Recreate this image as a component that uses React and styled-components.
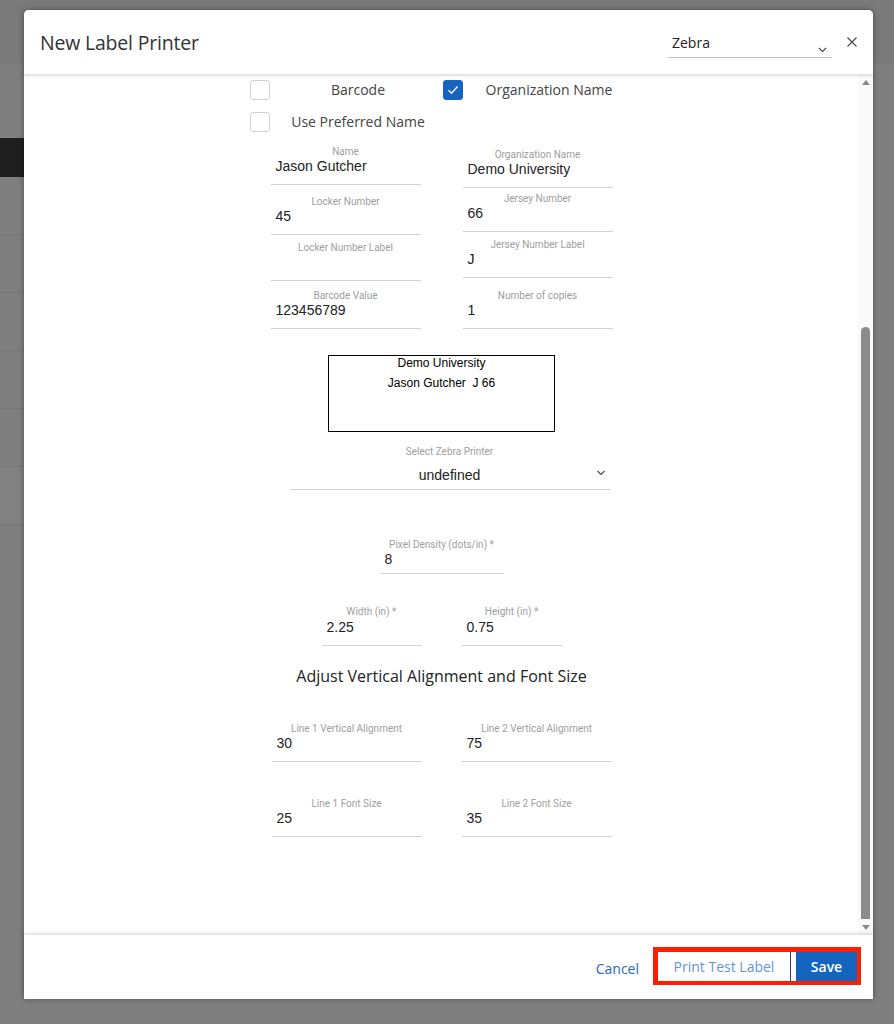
import React from "react";
import styled, { createGlobalStyle } from "styled-components";

const Global = createGlobalStyle`
  html, body { margin: 0; padding: 0; }
  body { background: #7f7f7f; font-family: "Open Sans", "Liberation Sans", sans-serif; overflow: hidden; }
  * { box-sizing: border-box; }
`;

const Page = styled.div`
  position: relative;
  width: 894px;
  height: 1024px;
  background: #7f7f7f;
  overflow: hidden;
`;

const Behind = styled.div`
  display: flex;
  flex-direction: column;
`;

const TopBand = styled.div`
  height: 63px;
  background: #7a7a7a;
`;

const Gap = styled.div`
  height: ${(p) => p.$h}px;
`;

const ActiveRow = styled.div`
  height: 39px;
  width: 24px;
  background: #1e1e1e;
`;

const BgRow = styled.div`
  height: 58px;
  width: 24px;
  border-bottom: 1px solid #777;
  background: ${(p) => (p.$light ? "#828282" : "#7f7f7f")};
`;

const Modal = styled.div`
  position: absolute;
  top: 10px;
  left: 24px;
  width: 849px;
  height: 989px;
  background: #fff;
  border-radius: 5px 5px 0 0;
  box-shadow: 0 0 6px rgba(0, 0, 0, 0.35);
  display: flex;
  flex-direction: column;
`;

const Header = styled.div`
  height: 64px;
  flex: none;
  display: flex;
  align-items: center;
  justify-content: space-between;
  padding: 0 16px;
  position: relative;
  z-index: 2;
  box-shadow: 0 2px 3px rgba(0, 0, 0, 0.13);
  border-radius: 5px 5px 0 0;
  background: #fff;
`;

const Title = styled.h1`
  margin: 0;
  font-family: "Open Sans", sans-serif;
  font-size: 19.5px;
  font-weight: 400;
  color: #333;
  letter-spacing: -0.2px;
`;

const HeaderRight = styled.div`
  display: flex;
  align-items: center;
  gap: 14px;
`;

const VendorSelect = styled.div`
  width: 164px;
  height: 29px;
  margin-top: 3px;
  padding: 4px 0 0 4px;
  border-bottom: 1px solid #c4c4c4;
  display: flex;
  align-items: flex-start;
  justify-content: space-between;
  font-family: "Open Sans", sans-serif;
  font-size: 14px;
  color: #222;
  line-height: 20px;
  svg { margin-top: 14px; margin-right: 5px; }
`;

const CloseBtn = styled.button`
  border: 0;
  background: none;
  padding: 0;
  width: 11px;
  height: 12px;
  display: flex;
  align-items: center;
  justify-content: center;
  cursor: pointer;
`;

const Body = styled.div`
  flex: 1;
  display: flex;
  overflow: hidden;
  min-height: 0;
`;

const Content = styled.div`
  flex: 1;
  display: flex;
  flex-direction: column;
  align-items: center;
  padding-top: 6px;
  padding-left: 1px;
`;

const CheckGrid = styled.div`
  display: grid;
  grid-template-columns: 20px 173px 20px 173px;
  row-gap: 12px;
  align-items: center;
  margin-left: 2px;
`;

const Box = styled.span`
  width: 20px;
  height: 20px;
  border-radius: 3px;
  border: 1px solid ${(p) => (p.$checked ? "#1565c0" : "#d2d2d2")};
  background: ${(p) => (p.$checked ? "#1565c0" : "#fff")};
  display: flex;
  align-items: center;
  justify-content: center;
`;

const CheckLabel = styled.span`
  text-align: center;
  padding-left: ${(p) => p.$pl || 0}px;
  font-family: "Open Sans", sans-serif;
  font-size: 14px;
  color: #444;
  line-height: 20px;
`;

const FieldGrid = styled.div`
  display: grid;
  grid-template-columns: 150px 150px;
  column-gap: 42px;
  margin-top: ${(p) => p.$mt || 0}px;
  align-items: start;
`;

const Column = styled.div`
  display: flex;
  flex-direction: column;
  padding-top: ${(p) => p.$pt || 0}px;
`;

const Field = styled.div`
  width: ${(p) => p.$w || 150}px;
  margin-top: ${(p) => p.$mt || 0}px;
  padding-bottom: ${(p) => (p.$pb == null ? 9 : p.$pb)}px;
  border-bottom: 1px solid #d3d3d3;
  display: flex;
  flex-direction: column;
`;

const FieldLabel = styled.div`
  font-family: Roboto, "Liberation Sans", sans-serif;
  font-size: 10px;
  line-height: 12px;
  color: #9e9e9e;
  text-align: center;
`;

const FieldValue = styled.div`
  font-family: "Liberation Sans", Arial, sans-serif;
  font-size: 14px;
  line-height: ${(p) => p.$lh || 17}px;
  min-height: ${(p) => p.$lh || 17}px;
  margin-top: ${(p) => p.$mt || 0}px;
  color: #222;
  padding-left: 5px;
`;

const Preview = styled.div`
  width: 227px;
  height: 77px;
  margin-top: 26px;
  border: 1px solid #000;
  display: flex;
  flex-direction: column;
  align-items: center;
  font-family: "Liberation Sans", Arial, sans-serif;
  font-size: 12px;
  color: #000;
`;

const PreviewLine = styled.div`
  line-height: 14px;
  margin-top: ${(p) => p.$mt || 0}px;
  white-space: pre;
`;

const SelectField = styled.div`
  width: 320px;
  margin-top: 14px;
  margin-left: 16px;
  border-bottom: 1px solid #d3d3d3;
  padding-bottom: 6px;
  display: flex;
  flex-direction: column;
`;

const SelectRow = styled.div`
  margin-top: 9px;
  position: relative;
  display: flex;
  justify-content: center;
  font-family: "Liberation Sans", Arial, sans-serif;
  font-size: 14px;
  line-height: 16px;
  color: #222;
  svg { position: absolute; right: 4px; top: 3px; }
`;

const PairRow = styled.div`
  display: flex;
  gap: 40px;
  margin-top: ${(p) => p.$mt || 0}px;
`;

const SectionTitle = styled.h2`
  margin: 19px 0 0;
  font-family: "Open Sans", sans-serif;
  font-size: 16px;
  font-weight: 400;
  line-height: 22px;
  color: #222;
`;

const ScrollRail = styled.div`
  width: 15px;
  flex: none;
  background: #fafafa;
  display: flex;
  flex-direction: column;
  align-items: center;
`;

const Arrow = styled.div`
  width: 0;
  height: 0;
  border-left: 4.5px solid transparent;
  border-right: 4.5px solid transparent;
  ${(p) =>
    p.$down
      ? "border-top: 5px solid #8a8a8a; margin: 6px 0 5px;"
      : "border-bottom: 5px solid #8a8a8a; margin-top: 6px;"}
`;

const Track = styled.div`
  flex: 1;
  width: 100%;
  display: flex;
  flex-direction: column;
  justify-content: flex-end;
  align-items: center;
`;

const Thumb = styled.div`
  width: 9px;
  height: 592px;
  border-radius: 5px 5px 0 0;
  background: #8b8b8b;
`;

const Footer = styled.div`
  height: 64px;
  flex: none;
  position: relative;
  z-index: 2;
  box-shadow: 0 -2px 3px rgba(0, 0, 0, 0.13);
  background: #fff;
  display: flex;
  align-items: center;
  justify-content: flex-end;
  padding: 0 12px 2px 0;
  gap: 14px;
`;

const LinkButton = styled.button`
  border: 0;
  background: none;
  padding: 0;
  margin-top: 4px;
  font-family: "Open Sans", sans-serif;
  font-size: 14px;
  color: #2469c4;
  cursor: pointer;
`;

const Highlight = styled.div`
  border: 5px solid #ff1e00;
  border-right-width: 4px;
  border-bottom-width: 4px;
  display: flex;
  background: #fff;
`;

const Btn = styled.button`
  height: 29px;
  border: 0;
  padding: 0;
  white-space: nowrap;
  font-family: "Open Sans", sans-serif;
  font-size: 14px;
  font-weight: ${(p) => (p.$primary ? 600 : 400)};
  color: ${(p) => (p.$primary ? "#fff" : "#6495da")};
  background: ${(p) => (p.$primary ? "#1565c0" : "#fff")};
  border-right: ${(p) => (p.$primary ? "0" : "1px solid #2a3f80")};
  margin-left: ${(p) => (p.$primary ? 5 : 0)}px;
  width: ${(p) => p.$w}px;
  cursor: pointer;
`;

const Chevron = ({ w = 9 }) => (
  <svg width={w} height="6" viewBox="0 0 9 6" fill="none">
    <path d="M1 1l3.5 3.5L8 1" stroke="#444" strokeWidth="1.1" />
  </svg>
);

const TextField = ({ label, value, w, mt, pb, lh, vmt }) => (
  <Field $w={w} $mt={mt} $pb={pb}>
    <FieldLabel>{label}</FieldLabel>
    <FieldValue $lh={lh} $mt={vmt}>{value}</FieldValue>
  </Field>
);

const Check = ({ checked }) => (
  <Box $checked={checked}>
    {checked && (
      <svg width="12" height="10" viewBox="0 0 12 10" fill="none">
        <path d="M1.5 5.2l3 3L10.5 1.5" stroke="#fff" strokeWidth="1.4" />
      </svg>
    )}
  </Box>
);

export default function App() {
  return (
    <>
      <Global />
      <Page>
        <Behind>
          <TopBand />
          <Gap $h={75} />
          <ActiveRow />
          <BgRow />
          <BgRow />
          <BgRow />
          <BgRow />
          <BgRow />
          <BgRow $light />
        </Behind>
        <Modal>
          <Header>
            <Title>New Label Printer</Title>
            <HeaderRight>
              <VendorSelect>
                <span>Zebra</span>
                <Chevron />
              </VendorSelect>
              <CloseBtn aria-label="Close">
                <svg width="10" height="10" viewBox="0 0 10 10">
                  <path d="M0.5 0.5l9 9M9.5 0.5l-9 9" stroke="#444" strokeWidth="1.1" />
                </svg>
              </CloseBtn>
            </HeaderRight>
          </Header>
          <Body>
            <Content>
              <CheckGrid>
                <Check />
                <CheckLabel $pl={4}>Barcode</CheckLabel>
                <Check checked />
                <CheckLabel>Organization Name</CheckLabel>
                <Check />
                <CheckLabel $pl={4}>Use Preferred Name</CheckLabel>
              </CheckGrid>
              <FieldGrid $mt={14}>
                <Column>
                  <TextField label="Name" value="Jason Gutcher" />
                  <TextField label="Locker Number" value="45" mt={11} />
                  <TextField label="Locker Number Label" value="" mt={7} />
                  <TextField label="Barcode Value" value="123456789" mt={9} />
                </Column>
                <Column $pt={3}>
                  <TextField label="Organization Name" value="Demo University" />
                  <TextField label="Jersey Number" value="66" mt={5} />
                  <TextField label="Jersey Number Label" value="J" mt={7} />
                  <TextField label="Number of copies" value="1" mt={12} />
                </Column>
              </FieldGrid>
              <Preview>
                <PreviewLine>Demo University</PreviewLine>
                <PreviewLine $mt={6}>{"Jason Gutcher  J 66"}</PreviewLine>
              </Preview>
              <SelectField>
                <FieldLabel>Select Zebra Printer</FieldLabel>
                <SelectRow>
                  undefined
                  <Chevron w={10} />
                </SelectRow>
              </SelectField>
              <PairRow $mt={49}>
                <TextField label="Pixel Density (dots/in) *" value="8" w={124} pb={6} lh={16} />
              </PairRow>
              <PairRow $mt={32}>
                <TextField label="Width (in) *" value="2.25" w={100} lh={17} vmt={1} />
                <TextField label="Height (in) *" value="0.75" w={100} lh={17} vmt={1} />
              </PairRow>
              <SectionTitle>Adjust Vertical Alignment and Font Size</SectionTitle>
              <PairRow $mt={36}>
                <TextField label="Line 1 Vertical Alignment" value="30" />
                <TextField label="Line 2 Vertical Alignment" value="75" />
              </PairRow>
              <PairRow $mt={36}>
                <TextField label="Line 1 Font Size" value="25" />
                <TextField label="Line 2 Font Size" value="35" />
              </PairRow>
            </Content>
            <ScrollRail>
              <Arrow />
              <Track>
                <Thumb />
              </Track>
              <Arrow $down />
            </ScrollRail>
          </Body>
          <Footer>
            <LinkButton>Cancel</LinkButton>
            <Highlight>
              <Btn $w={133}>Print Test Label</Btn>
              <Btn $primary $w={61}>Save</Btn>
            </Highlight>
          </Footer>
        </Modal>
      </Page>
    </>
  );
}
